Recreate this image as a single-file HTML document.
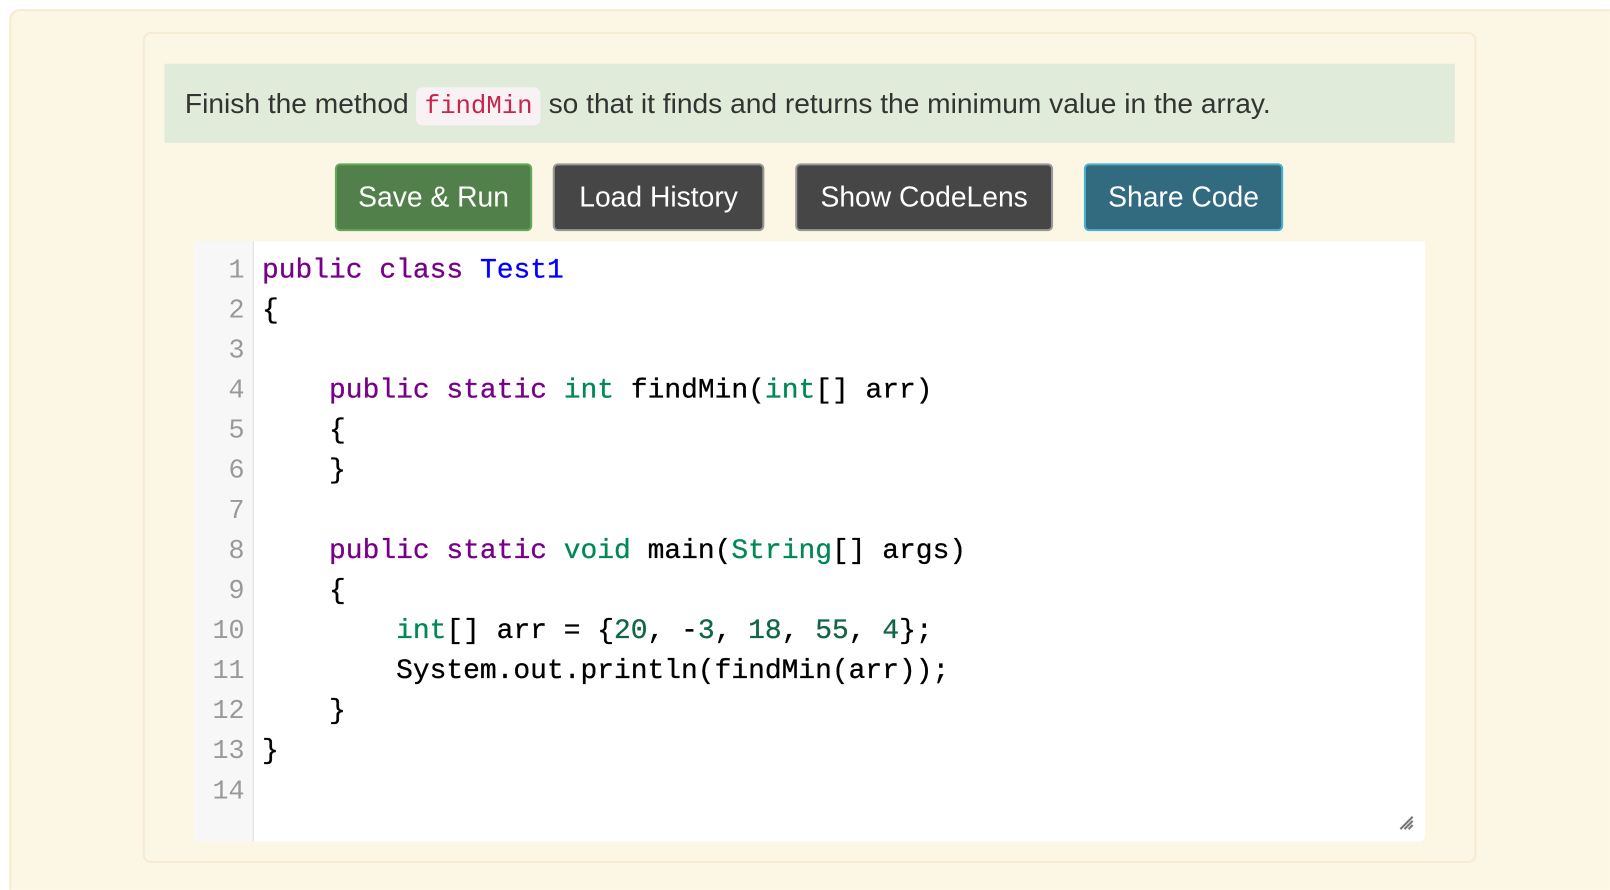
<!DOCTYPE html>
<html style="overflow:hidden;height:890px"><head><style>
body{margin:0;width:1610px;height:890px;background:#fff;font-family:"Liberation Sans",sans-serif;overflow:hidden;position:relative}
#w{position:absolute;left:0;top:0;width:1567px;height:866px;overflow:hidden;transform:scale(1.0274);transform-origin:0 0}
.outer{position:absolute;left:9px;top:9px;width:1590px;height:880px;background:#fbf7e4;border:2px solid #f6ead2;border-radius:10px;box-sizing:border-box}
.inner{position:absolute;left:139px;top:31px;width:1298px;height:809px;background:#fbf7e4;border:2px solid #f6ead2;border-radius:8px;box-sizing:border-box}
.banner{position:absolute;left:160px;top:62px;width:1256px;height:77px;background:#e1ebd9;color:#333;font-size:27.4px;line-height:77px;padding-left:20px;box-sizing:border-box;white-space:nowrap}
.banner code{font-family:"Liberation Mono",monospace;color:#c7254e;background:#f9f2f4;border-radius:6px;padding:4px 8px;font-size:25px}
.btn{position:absolute;top:159px;height:66px;box-sizing:border-box;border-radius:5px;color:#fff;font-size:27.5px;line-height:62px;text-align:center;border:2px solid}
.editor{position:absolute;left:189px;top:235px;width:1198px;height:584px;background:#fff;border-radius:0 0 6px 6px}
.gutter{position:absolute;left:0;top:0;width:57px;height:584px;background:#f7f7f7;border-right:1px solid #ddd}
pre{position:absolute;left:66px;top:9px;margin:0;font-family:"Liberation Mono",monospace;font-size:27.2px;line-height:39px;color:#000;-webkit-text-stroke:0.3px #000}
.k{color:#708;-webkit-text-stroke-color:#708}.d{color:#00f;-webkit-text-stroke-color:#00f}.t{color:#085;-webkit-text-stroke-color:#085}.n{color:#164;-webkit-text-stroke-color:#164}
</style></head><body>
<div id="w">
<div class="outer"></div>
<div class="inner"></div>
<div class="banner">Finish the method <code>findMin</code> so that it finds and returns the minimum value in the array.</div>
<div class="btn" style="left:326px;width:192px;background:#52804b;border-color:#62a858">Save &amp; Run</div>
<div class="btn" style="left:538px;width:206px;background:#464646;border-color:#999">Load History</div>
<div class="btn" style="left:774px;width:251px;background:#464646;border-color:#999">Show CodeLens</div>
<div class="btn" style="left:1055px;width:194px;background:#326a80;border-color:#4ab0d0">Share Code</div>
<div class="editor">
<div class="gutter">
<div style="position:absolute;right:8px;top:9px;color:#999;font-family:'Liberation Mono',monospace;font-size:26px;line-height:39px;text-align:right">1<br>2<br>3<br>4<br>5<br>6<br>7<br>8<br>9<br>10<br>11<br>12<br>13<br>14</div>
</div>
<pre><span class="k">public</span> <span class="k">class</span> <span class="d">Test1</span>
{

    <span class="k">public</span> <span class="k">static</span> <span class="t">int</span> findMin(<span class="t">int</span>[] arr)
    {
    }

    <span class="k">public</span> <span class="k">static</span> <span class="t">void</span> main(<span class="t">String</span>[] args)
    {
        <span class="t">int</span>[] arr = {<span class="n">20</span>, -<span class="n">3</span>, <span class="n">18</span>, <span class="n">55</span>, <span class="n">4</span>};
        System.out.println(findMin(arr));
    }
}
</pre>
<svg style="position:absolute;right:10px;bottom:10px" width="16" height="16"><path d="M2 14L14 2M6 14L14 6M10 14L14 10" stroke="#777" stroke-width="2"/></svg>
</div>
</div>
</body></html>
